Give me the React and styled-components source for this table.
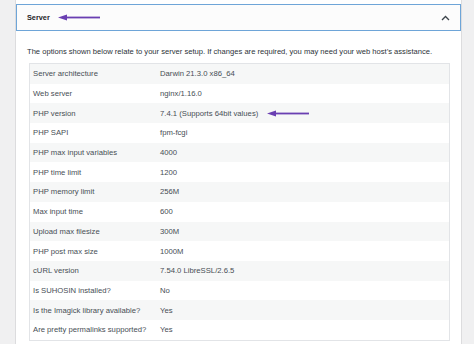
import React from 'react'
import styled, { createGlobalStyle } from 'styled-components'

const GlobalStyle = createGlobalStyle`
  html, body {
    margin: 0;
    height: 100%;
    overflow: hidden;
    background: #f0f0f1;
  }
  body {
    font-family: "Liberation Sans", Arial, sans-serif;
    color: #3c434a;
  }
`

const Page = styled.div`
  padding-left: 15px;
  width: 447px;
`

const Panel = styled.section`
  background: #fff;
  border: 1px solid #dcdcde;
  border-top: none;
  padding-top: 4px;
  padding-bottom: 12px;
`

const Header = styled.button`
  display: flex;
  align-items: center;
  justify-content: space-between;
  width: 100%;
  height: 27px;
  box-sizing: border-box;
  margin: 0;
  padding: 0 10px;
  border: 1px solid #6ea5d8;
  background: #fcfcfc;
  font: inherit;
  cursor: pointer;
`

const Title = styled.span`
  display: flex;
  align-items: center;
  font-size: 7.3px;
  font-weight: 700;
  color: #1d2327;
`

const Body = styled.div`
  padding: 0 10px 0 11px;
`

const Description = styled.p`
  margin: 16px 0 6px;
  font-size: 7.6px;
  line-height: 10px;
  color: #2c3338;
`

const Table = styled.div`
  margin-left: 2px;
  margin-right: 1px;
  border: 1px solid #e2e4e7;
`

const Row = styled.div`
  display: grid;
  grid-template-columns: 127px 1fr;
  align-items: center;
  height: 19.7px;
  background: ${props => (props.striped ? '#f6f7f7' : '#fff')};
`

const Cell = styled.div`
  display: flex;
  align-items: center;
  padding: 0 3px;
  font-size: 7.7px;
  color: #474e55;
  white-space: nowrap;
`

const Pointer = ({ gap = 8 }) => (
  <svg
    width="42"
    height="7"
    viewBox="0 0 42 7"
    style={{ marginLeft: gap, display: 'block' }}
  >
    <polygon points="0,3.5 9,0.5 9,6.5" fill="#6a3fb2" />
    <rect x="8" y="2.6" width="34" height="1.8" fill="#6a3fb2" />
  </svg>
)

const Chevron = () => (
  <svg width="9" height="6" viewBox="0 0 9 6">
    <polyline
      points="1,5 4.5,1.5 8,5"
      fill="none"
      stroke="#3c434a"
      strokeWidth="1.3"
    />
  </svg>
)

const rows = [
  ['Server architecture', 'Darwin 21.3.0 x86_64'],
  ['Web server', 'nginx/1.16.0'],
  ['PHP version', '7.4.1 (Supports 64bit values)', true],
  ['PHP SAPI', 'fpm-fcgi'],
  ['PHP max input variables', '4000'],
  ['PHP time limit', '1200'],
  ['PHP memory limit', '256M'],
  ['Max input time', '600'],
  ['Upload max filesize', '300M'],
  ['PHP post max size', '1000M'],
  ['cURL version', '7.54.0 LibreSSL/2.6.5'],
  ['Is SUHOSIN installed?', 'No'],
  ['Is the Imagick library available?', 'Yes'],
  ['Are pretty permalinks supported?', 'Yes']
]

const App = () => (
  <>
    <GlobalStyle />
    <Page>
      <Panel>
        <Header type="button" aria-expanded="true">
          <Title>
            Server
            <Pointer gap={8} />
          </Title>
          <Chevron />
        </Header>
        <Body>
          <Description>
            The options shown below relate to your server setup. If changes
            are required, you may need your web host’s assistance.
          </Description>
          <Table>
            {rows.map(([label, value, marked], index) => (
              <Row key={label} striped={index % 2 === 0}>
                <Cell>{label}</Cell>
                <Cell>
                  {value}
                  {marked && <Pointer gap={9} />}
                </Cell>
              </Row>
            ))}
          </Table>
        </Body>
      </Panel>
    </Page>
  </>
)

export default App
